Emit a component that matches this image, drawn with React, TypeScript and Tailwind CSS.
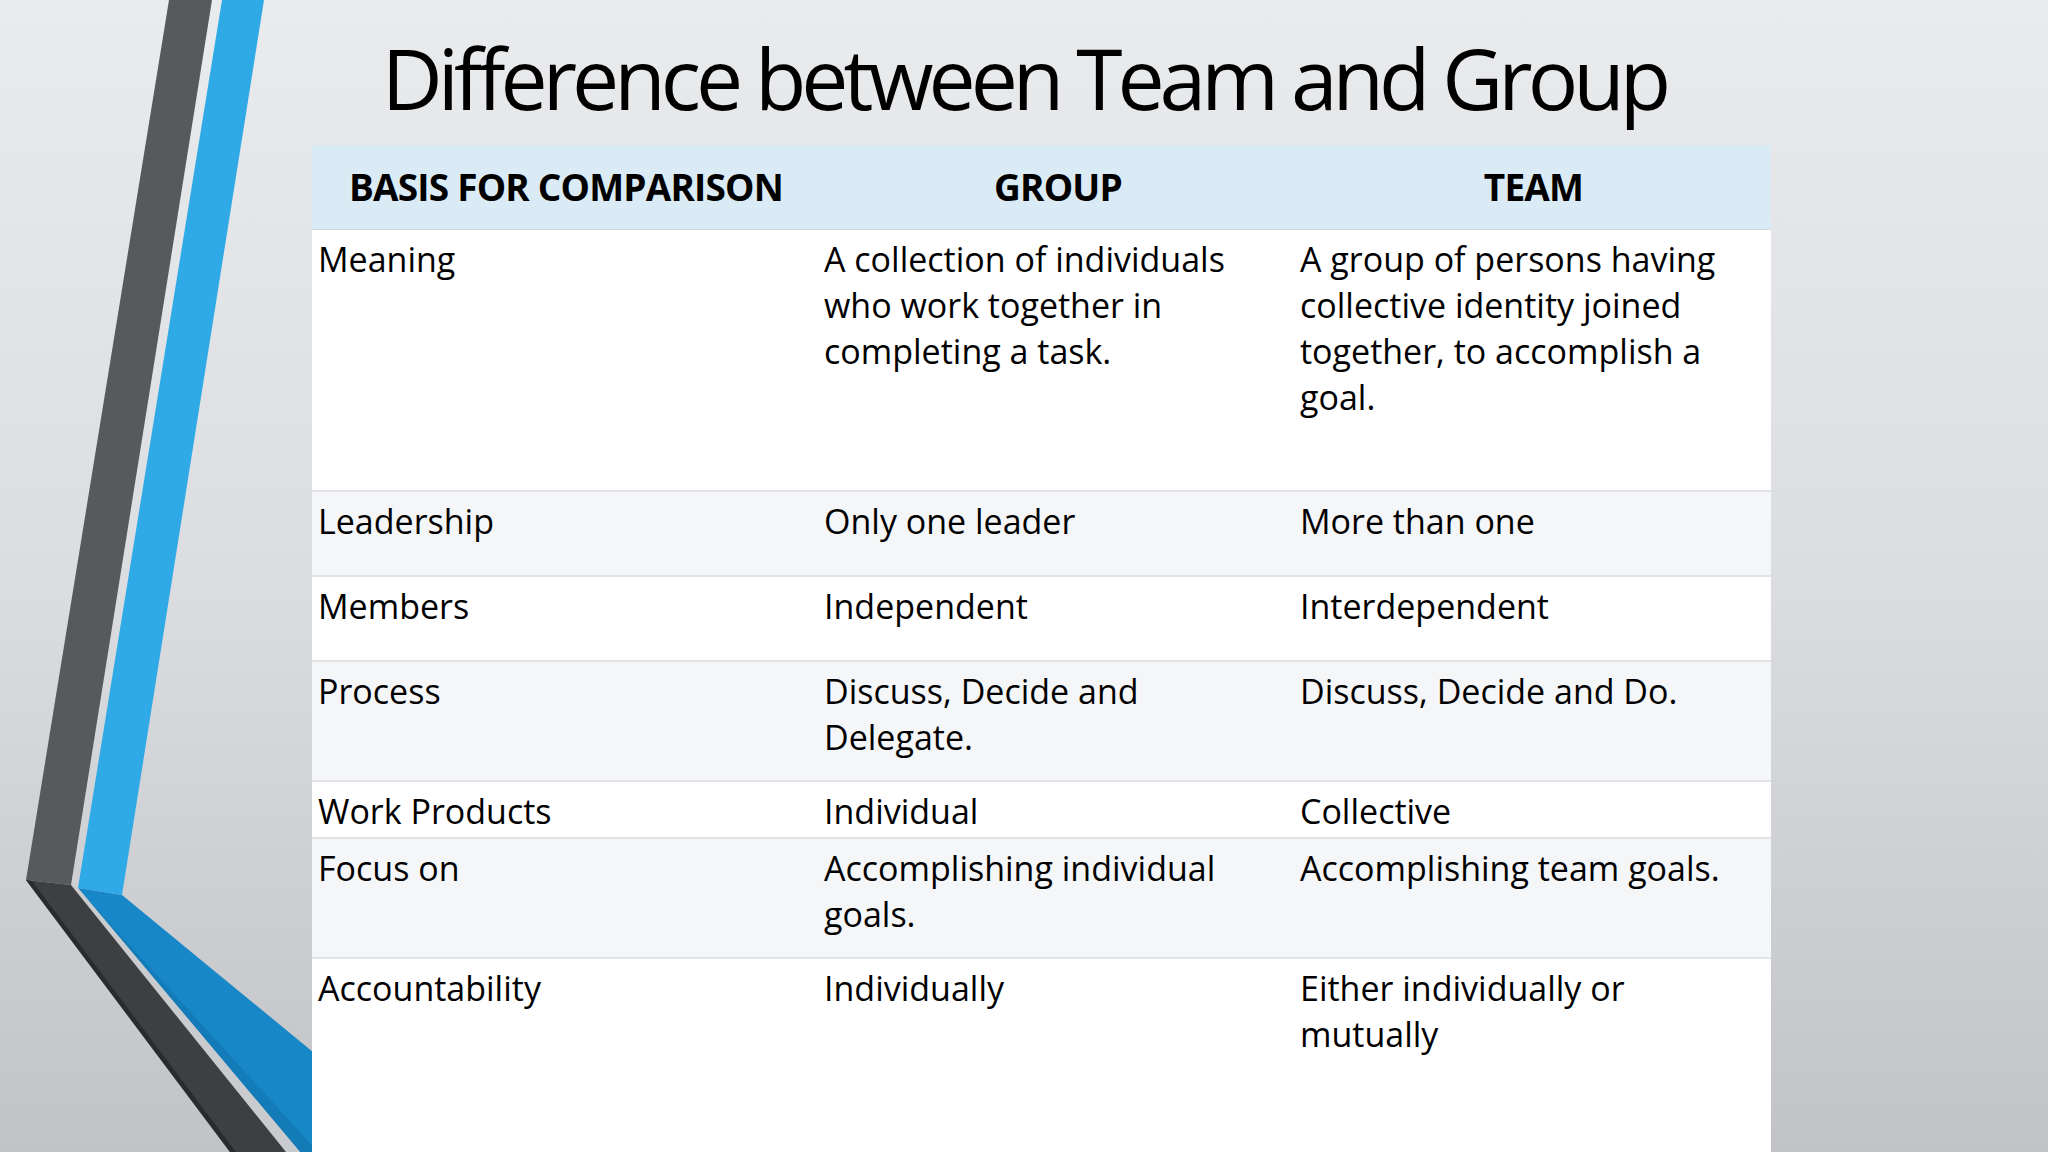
import React from "react";

const rows: { h: string; bg: string; cells: string[][] }[] = [
  {
    h: "h-[260px]",
    bg: "bg-white",
    cells: [
      ["Meaning"],
      ["A collection of individuals", "who work together in", "completing a task."],
      ["A group of persons having", "collective identity joined", "together, to accomplish a", "goal."],
    ],
  },
  { h: "h-[85px]", bg: "bg-[#f5f6f8]", cells: [["Leadership"], ["Only one leader"], ["More than one"]] },
  { h: "h-[85px]", bg: "bg-white", cells: [["Members"], ["Independent"], ["Interdependent"]] },
  {
    h: "h-[120px]",
    bg: "bg-[#f5f6f8]",
    cells: [["Process"], ["Discuss, Decide and", "Delegate."], ["Discuss, Decide and Do."]],
  },
  { h: "h-[57px]", bg: "bg-white", cells: [["Work Products"], ["Individual"], ["Collective"]] },
  {
    h: "h-[120px]",
    bg: "bg-[#f5f6f8]",
    cells: [["Focus on"], ["Accomplishing individual", "goals."], ["Accomplishing team goals."]],
  },
  {
    h: "h-[200px]",
    bg: "bg-white",
    cells: [["Accountability"], ["Individually"], ["Either individually or", "mutually"]],
  },
];

function Stripes() {
  return (
    <svg
      className="absolute left-0 top-0"
      width="2048"
      height="1152"
      viewBox="0 0 2048 1152"
    >
      <polygon points="169,0 212,0 71,885 26,880" fill="#58595b" />
      <polygon points="222,0 264,0 122,895 78,888" fill="#30a9e7" />
      <polygon points="78,888 122,895 330,1066 330,1152 300,1152" fill="#1787c7" />
      <polygon points="78,888 300,1152 318,1152 92,904" fill="#0f6fa8" opacity="0.5" />
      <polygon points="71,885 78,888 300,1152 286,1152" fill="#c9cbce" />
      <polygon points="26,880 71,885 286,1152 230,1152" fill="#3e3f41" />
      <polygon points="26,880 32,881 236,1152 230,1152" fill="#2a2b2d" />
    </svg>
  );
}

export default function App() {
  return (
    <div className="relative w-[2048px] h-[1152px] overflow-hidden bg-gradient-to-b from-[#eaebed] via-[#dcdde0] to-[#c1c3c6] font-['Open_Sans','Noto_Sans',sans-serif]">
      <Stripes />
      <div className="relative flex flex-col">
        <div className="h-[145px] flex items-start justify-center">
          <h1 className="mt-[28px] text-[84px] leading-[100px] text-black tracking-[-5px] whitespace-nowrap">
            Difference between Team and Group
          </h1>
        </div>
        <div className="ml-[312px] w-[1459px] flex flex-col">
          <div className="grid grid-cols-[508px_476px_475px] h-[85px] bg-[#daebf5] items-center border-b border-[#cfd6da]">
            <div className="text-center font-bold text-[37px] text-black tracking-[-0.8px]">
              BASIS FOR COMPARISON
            </div>
            <div className="text-center font-bold text-[37px] text-black tracking-[-0.8px]">GROUP</div>
            <div className="text-center font-bold text-[37px] text-black tracking-[-0.8px]">TEAM</div>
          </div>
          {rows.map((r, i) => (
            <div
              key={i}
              className={`grid grid-cols-[508px_476px_475px] ${r.h} ${r.bg} ${
                i > 0 ? "border-t-2 border-[#e2e3e6]" : ""
              }`}
            >
              {r.cells.map((c, j) => (
                <div
                  key={j}
                  className={`pt-[6px] text-[34px] leading-[46px] text-black ${
                    j === 0 ? "pl-[6px]" : "pl-[4px]"
                  }`}
                >
                  {c.map((line, k) => (
                    <div key={k} className="whitespace-nowrap">
                      {line}
                    </div>
                  ))}
                </div>
              ))}
            </div>
          ))}
        </div>
      </div>
    </div>
  );
}
